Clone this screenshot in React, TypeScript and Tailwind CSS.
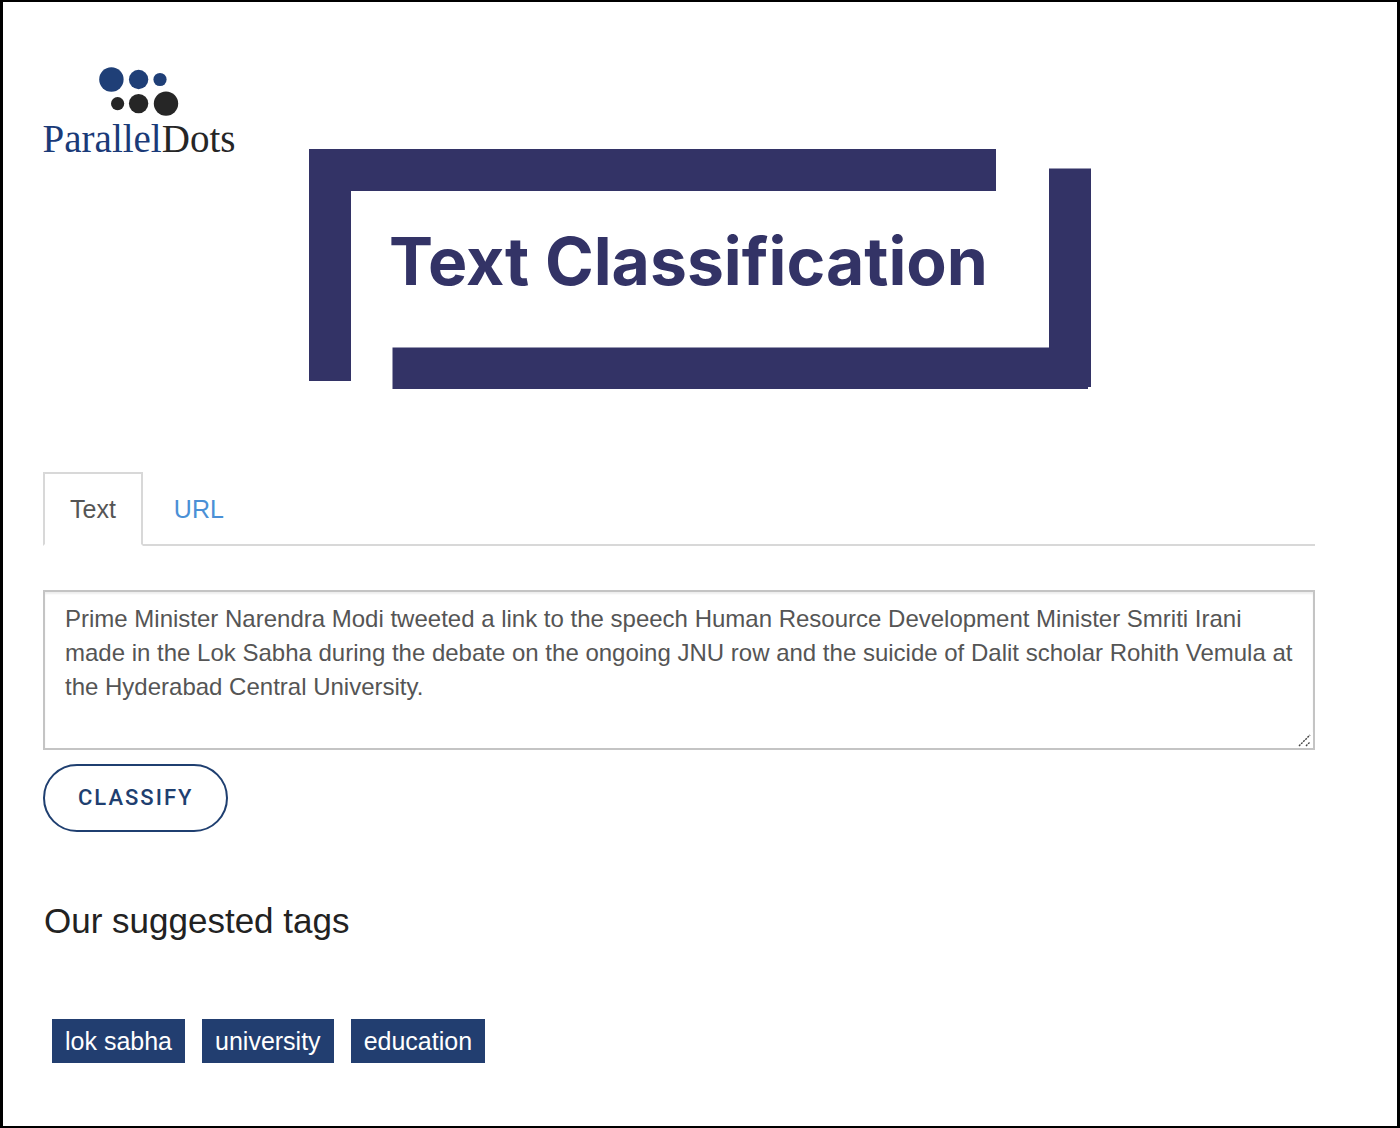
import { useState } from "react";

const SAMPLE_TEXT =
  "Prime Minister Narendra Modi tweeted a link to the speech Human Resource Development Minister Smriti Irani made in the Lok Sabha during the debate on the ongoing JNU row and the suicide of Dalit scholar Rohith Vemula at the Hyderabad Central University.";

const tabs = ["Text", "URL"];
const tags = ["lok sabha", "university", "education"];

function Logo() {
  return (
    <a href="#" className="flex w-[192px] shrink-0 flex-col items-center pt-[65px]">
      <svg width="80" height="49" viewBox="0 0 80 49" aria-hidden="true">
        <g fill="#1f3f77">
          <circle cx="12.4" cy="12.5" r="12.2" />
          <circle cx="39.6" cy="12.5" r="9.7" />
          <circle cx="61" cy="12.5" r="6.6" />
        </g>
        <g fill="#262626">
          <circle cx="18.6" cy="36.6" r="6.6" />
          <circle cx="39.6" cy="36.6" r="9.7" />
          <circle cx="67" cy="36.6" r="12.2" />
        </g>
      </svg>
      <span className="font-['Liberation_Serif',serif] text-[39px] leading-[46px] text-[#262626]">
        <span className="text-[#1a3a78]">Parallel</span>Dots
      </span>
    </a>
  );
}

function Banner() {
  return (
    <div className="mt-[147px] grid w-[782px]">
      <svg
        viewBox="0 0 782 240"
        fill="#333366"
        aria-hidden="true"
        className="col-start-1 row-start-1 w-full"
      >
        <path d="M0 0H687V42H42V232H0Z" />
        <path d="M740 19.5H782V238H779V240.5H83.5V198.5H740Z" />
      </svg>
      <h1 className="col-start-1 row-start-1 pt-[74px] pl-[80px] font-['Inter',sans-serif] text-[66px] leading-[76px] font-bold whitespace-nowrap text-[#333366]">
        Text Classification
      </h1>
    </div>
  );
}

export default function App() {
  const [activeTab, setActiveTab] = useState("Text");
  const [text, setText] = useState(SAMPLE_TEXT);

  return (
    <main className="min-h-screen border-2 border-x-3 border-black bg-white pr-[82px] pb-[60px] pl-10 font-['Liberation_Sans',Arial,sans-serif]">
      <header className="flex items-start gap-[74px]">
        <Logo />
        <Banner />
      </header>

      {/* Input tabs */}
      <nav className="mt-[83px] flex gap-1 border-b-2 border-[#d8d8d8]">
        {tabs.map((tab) => (
          <a
            key={tab}
            href="#"
            onClick={() => setActiveTab(tab)}
            className={`-mb-[2px] border-2 px-[25px] py-[17px] text-[25px] leading-[36px] ${
              activeTab === tab
                ? "border-[#d8d8d8] border-b-white bg-white text-[#555555]"
                : "border-transparent text-[#4a90d6]"
            }`}
          >
            {tab}
          </a>
        ))}
      </nav>

      <form className="mt-11 flex flex-col items-start gap-[14px]" onSubmit={(e) => e.preventDefault()}>
        <div className="relative w-full">
          <textarea
            aria-label="Text to classify"
            rows={4}
            value={text}
            onChange={(e) => setText(e.target.value)}
            className="block w-full resize-y border-2 border-[#c4c4c4] px-5 py-[10px] text-[24px] leading-[34px] text-[#555555] shadow-[inset_0_2px_2px_rgba(0,0,0,0.07)] outline-none"
          />
          {/* Resize grip */}
          <svg
            width="16"
            height="16"
            viewBox="0 0 16 16"
            stroke="#444444"
            strokeWidth="1.4"
            strokeDasharray="2 1"
            aria-hidden="true"
            className="pointer-events-none absolute right-[2px] bottom-[2px] bg-white"
          >
            <path d="M2 14L13 3M9 14L13 10" />
          </svg>
        </div>
        <button
          type="submit"
          className="rounded-full border-2 border-[#1f3f70] px-[33px] py-4 font-['Roboto',sans-serif] text-[22px] leading-[32px] font-medium tracking-[2px] text-[#1f3f70] uppercase"
        >
          Classify
        </button>
      </form>

      {/* Results */}
      <section>
        <h2 className="mt-[67px] pl-px text-[35px] leading-[44px] text-[#222222]">Our suggested tags</h2>
        <ul className="mt-[76px] flex flex-wrap gap-[17px] pl-[9px]">
          {tags.map((tag) => (
            <li key={tag} className="bg-[#223e70] px-[13px] text-[25px] leading-[44px] text-white">
              {tag}
            </li>
          ))}
        </ul>
      </section>
    </main>
  );
}
